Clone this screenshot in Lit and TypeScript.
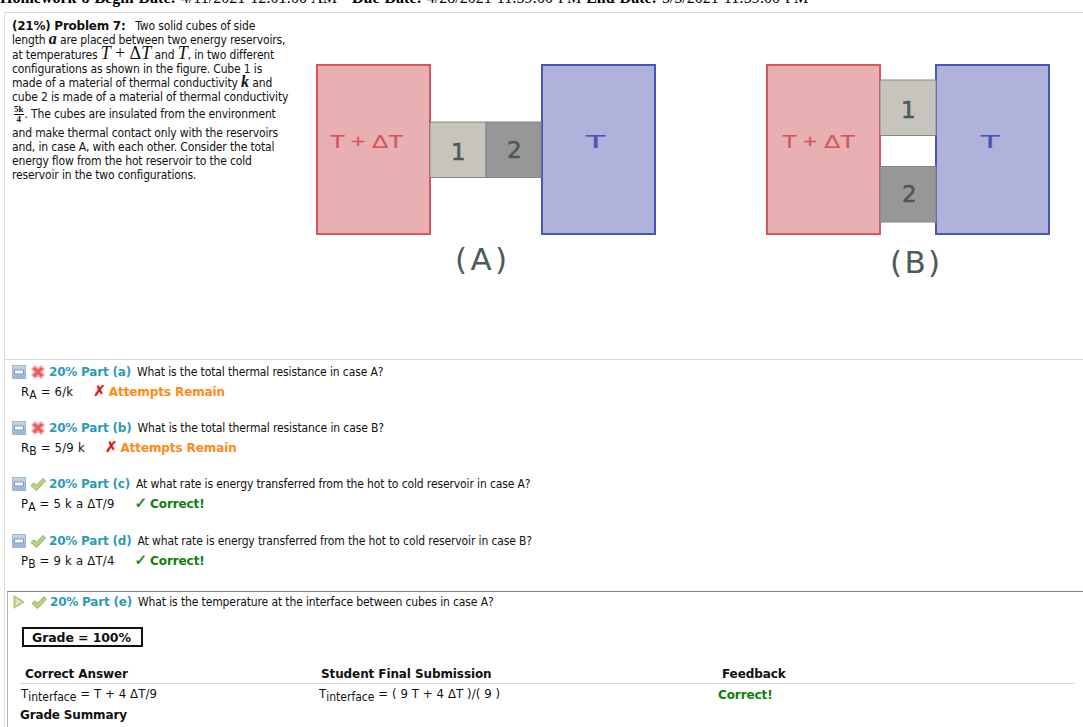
import {LitElement, css, html, svg} from 'lit';
import {customElement} from 'lit/decorators.js';

const minusIcon = html`<svg class="toggle" width="14" height="14" viewBox="0 0 14 14">
  <defs><linearGradient id="tg" x1="0" y1="0" x2="0" y2="1">
    <stop offset="0" stop-color="#c9d9ea"/><stop offset="1" stop-color="#94b3d2"/>
  </linearGradient></defs>
  <rect x="0.500" y="0.500" width="13" height="13" fill="url(#tg)" stroke="#9db8d4"/>
  <rect x="2.500" y="5" width="9" height="4" fill="#f6f9fc" stroke="#7f9cc0"/>
</svg>`;

const playIcon = html`<svg class="toggle" width="14" height="14" viewBox="0 0 14 14">
  <path d="M1.500 1.500 L10.500 7 L1.500 12.500 Z" fill="#dbe8b4" stroke="#b4c97f" stroke-width="2" stroke-linejoin="round"/>
</svg>`;

const crossIcon = html`<svg class="mark" width="16" height="16" viewBox="0 0 16 16">
  <path d="M2 5 L5 2 L8 5 L11 2 L14 5 L11 8 L14 11 L11 14 L8 11 L5 14 L2 11 L5 8 Z"
    fill="#e85a5a" stroke="#f2a0a0" stroke-width="1.500" stroke-linejoin="round"/>
</svg>`;

const checkIcon = html`<svg class="mark" width="16" height="16" viewBox="0 0 16 16">
  <path d="M1 9.500 L4 6.800 L6.500 9.300 L13 2.500 L15.500 5 L6.500 14.500 Z"
    fill="#b9d37c" stroke="#93ad62" stroke-width="1" stroke-linejoin="round"/>
</svg>`;

const reservoirs = (red: number, blue: number) => svg`
  <rect x="${red}" y="65" width="113" height="169" fill="#e8b0b3" stroke="#d4575d" stroke-width="2"/>
  <rect x="${blue}" y="65" width="113" height="169" fill="#b1b2dc" stroke="#4a56b5" stroke-width="2"/>`;

const cube = (x: number, y: number, w: number, h: number, fill: string) => svg`
  <rect x="${x}" y="${y}" width="${w}" height="${h}" fill="${fill}" stroke="#7f8a88" stroke-width="1"/>`;

function figA() {
  return svg`
    ${reservoirs(317, 542)}
    ${cube(430, 122, 56, 55.5, '#c6c4bd')}
    ${cube(486, 122, 55, 55.5, '#979797')}
    <text class="hand red" x="330" y="148" textLength="73" lengthAdjust="spacingAndGlyphs">T + ΔT</text>
    <text class="hand blue" x="585" y="148" textLength="21" lengthAdjust="spacingAndGlyphs">T</text>
    <text class="num dark" x="451" y="160">1</text>
    <text class="num dark" x="507" y="158">2</text>
    <text class="label dark" x="455" y="270" textLength="52">(A)</text>
  `;
}

function figB() {
  return svg`
    ${reservoirs(767, 936)}
    ${cube(880, 80, 56, 55.5, '#c6c4bd')}
    ${cube(880, 166.5, 56, 55.5, '#979797')}
    <text class="hand red" x="782" y="148" textLength="73" lengthAdjust="spacingAndGlyphs">T + ΔT</text>
    <text class="hand blue" x="980" y="148" textLength="20" lengthAdjust="spacingAndGlyphs">T</text>
    <text class="num dark" x="901" y="118">1</text>
    <text class="num dark" x="902" y="202">2</text>
    <text class="label dark" x="890" y="273" textLength="50">(B)</text>
  `;
}

@customElement('app-root')
export class AppRoot extends LitElement {
  static styles = css`
    :host {
      display: block;
      width: 1083px;
      height: 727px;
      overflow: hidden;
      background: white;
      color: #111;
      font: 12px/14px "DejaVu Sans Condensed", "DejaVu Sans", sans-serif;
      letter-spacing: -0.15px;
    }
    b, .bold {
      font-family: "DejaVu Sans", sans-serif;
      font-weight: bold;
      letter-spacing: -0.25px;
    }
    .header {
      height: 12px;
      overflow: hidden;
      white-space: nowrap;
      font: 16px/18px "Liberation Serif", serif;
      letter-spacing: 0;
      word-spacing: 1px;
      color: #000;
    }
    /* the page is scrolled: only the feet of this line are still in view */
    .header span { position: relative; top: -11px; }
    .header b { font-family: inherit; letter-spacing: 0; }
    .content {
      margin-left: 4px;
      border-left: 1px solid #dcdcdc;
      height: 715px;
    }
    .problem {
      display: flex;
      height: 348px;
      box-sizing: border-box;
      border-top: 1px solid #d8d8d8;
      border-bottom: 1px solid #d8d8d8;
    }
    .statement {
      flex: none;
      width: 298px;
      padding: 6px 0 0 7px;
      white-space: nowrap;
    }
    .math {
      font-family: "Liberation Serif", serif;
      font-style: italic;
      font-size: 18px;
      line-height: 12px;
      letter-spacing: 0;
    }
    .math.heavy { font-weight: bold; font-size: 16px; }
    .math .up { font-style: normal; }
    .fraction {
      display: inline-flex;
      flex-direction: column;
      align-items: center;
      vertical-align: middle;
      margin: 1px 1px 1.500px 2px;
      font: bold 9px/9px "Liberation Serif", serif;
      letter-spacing: 0;
    }
    .fraction span + span {
      border-top: 1px solid #111;
      padding: 0 1px;
      align-self: stretch;
      text-align: center;
    }
    .figure {
      flex: none;
      margin-top: 42px;
    }
    .hand {
      font-family: "Liberation Sans", sans-serif;
      font-size: 19px;
      stroke-width: 0.2px;
    }
    .num {
      font-family: "DejaVu Sans", sans-serif;
      font-size: 23px;
      stroke: #4d5a5a;
      stroke-width: 0.6px;
    }
    .label {
      font-family: "DejaVu Sans", sans-serif;
      font-size: 31px;
    }
    .red { fill: #d4575d; stroke: #d4575d; }
    .blue { fill: #4a56b5; stroke: #4a56b5; }
    .dark { fill: #4d5a5a; }
    .parts { padding-top: 3px; }
    .part {
      margin-left: 7px;
      height: 56.200px;
    }
    .part-head {
      display: flex;
      align-items: center;
      height: 18px;
      white-space: nowrap;
      letter-spacing: -0.12px;
    }
    .toggle { margin-right: 4px; flex: none; }
    .mark { margin-right: 3px; flex: none; }
    .pct {
      font: bold 12px/14px "DejaVu Sans", sans-serif;
      letter-spacing: -0.2px;
      color: #2b9ab8;
      margin-right: 6px;
    }
    .answer {
      display: flex;
      align-items: baseline;
      margin: 3px 0 0 9px;
      height: 16px;
      white-space: nowrap;
    }
    .expr {
      font-size: 13px;
      letter-spacing: 0.2px;
    }
    sub { font-size: 12px; line-height: 0; vertical-align: -3px; letter-spacing: 0; }
    .verdict {
      font: bold 12px/14px "DejaVu Sans", sans-serif;
      letter-spacing: -0.1px;
      margin-left: 20px;
    }
    .verdict i {
      font-style: normal;
      font-size: 15px;
      margin-right: -1px;
      -webkit-text-stroke: 0.4px currentColor;
    }
    .wrong { color: #ff8a14; }
    .wrong i { color: #e01010; }
    .right { color: #0b800b; }
    .open {
      margin: 3px 0 0 2px;
      border-top: 1px solid #808080;
      border-left: 1px solid #b0b0b0;
      padding: 1px 0 0 5px;
      height: 200px;
    }
    .grade {
      box-sizing: border-box;
      margin: 16px 0 0 9px;
      width: 121px;
      height: 20px;
      border: 2px solid #111;
      padding-left: 8px;
      white-space: nowrap;
      font: bold 12.500px/18px "DejaVu Sans", sans-serif;
      letter-spacing: -0.1px;
    }
    .table {
      margin: 19px 8px 0 7px;
      display: grid;
      grid-template-columns: 296px 401px 1fr;
    }
    .th {
      font: bold 12px/16px "DejaVu Sans", sans-serif;
      letter-spacing: -0.1px;
      border-bottom: 1px solid #d8d8d8;
      padding: 0 0 1px 5px;
    }
    .td {
      padding: 3px 0 0 1px;
      height: 17px;
      white-space: nowrap;
      font-size: 13px;
      letter-spacing: 0.1px;
    }
    .td.mid { padding-left: 3px; }
    .td.fb { padding-top: 4px; height: 16px; font-size: 12px; letter-spacing: -0.1px; color: #0b800b; }
    .summary {
      font: bold 12px/14px "DejaVu Sans", sans-serif;
      margin: 4px 0 0 7px;
    }
  `;

  renderHead(closed: boolean, ok: boolean, label: string, question: string) {
    return html`
      <div class="part-head">
        ${closed ? minusIcon : playIcon}
        ${ok ? checkIcon : crossIcon}
        <span class="pct">20% Part ${label}</span>
        <span>${question}</span>
      </div>`;
  }

  render() {
    return html`
      <div class="header"><span><b>Homework 8 Begin Date:</b> 4/11/2021 12:01:00 AM &nbsp;&nbsp;<b>Due Date:</b> 4/28/2021 11:59:00 PM <b>End Date:</b> 5/5/2021 11:59:00 PM</span></div>
      <div class="content">
        <div class="problem">
          <div class="statement">
            <b>(21%) Problem 7:</b>&nbsp;&nbsp; Two solid cubes of side<br>
            length <span class="math heavy">a</span> are placed between two energy reservoirs,<br>
            at temperatures <span class="math">T <span class="up">+ Δ</span>T</span> and <span class="math">T</span>, in two different<br>
            configurations as shown in the figure. Cube 1 is<br>
            made of a material of thermal conductivity <span class="math heavy">k</span> and<br>
            cube 2 is made of a material of thermal conductivity<br>
            <span class="fraction"><span>5k</span><span>4</span></span>. The cubes are insulated from the environment<br>
            and make thermal contact only with the reservoirs<br>
            and, in case A, with each other. Consider the total<br>
            energy flow from the hot reservoir to the cold<br>
            reservoir in the two configurations.
          </div>
          <svg class="figure" width="760" height="230" viewBox="310 55 760 230">${figA()}${figB()}</svg>
        </div>
        <div class="parts">
          <div class="part">
            ${this.renderHead(true, false, '(a)', 'What is the total thermal resistance in case A?')}
            <div class="answer"><span class="expr">R<sub>A</sub> = 6/k</span><span class="verdict wrong"><i>✗</i> Attempts Remain</span></div>
          </div>
          <div class="part">
            ${this.renderHead(true, false, '(b)', 'What is the total thermal resistance in case B?')}
            <div class="answer"><span class="expr">R<sub>B</sub> = 5/9 k</span><span class="verdict wrong"><i>✗</i> Attempts Remain</span></div>
          </div>
          <div class="part">
            ${this.renderHead(true, true, '(c)', 'At what rate is energy transferred from the hot to cold reservoir in case A?')}
            <div class="answer"><span class="expr">P<sub>A</sub> = 5 k a ΔT/9</span><span class="verdict right"><i>✓</i> Correct!</span></div>
          </div>
          <div class="part">
            ${this.renderHead(true, true, '(d)', 'At what rate is energy transferred from the hot to cold reservoir in case B?')}
            <div class="answer"><span class="expr">P<sub>B</sub> = 9 k a ΔT/4</span><span class="verdict right"><i>✓</i> Correct!</span></div>
          </div>
        </div>
        <div class="open">
          ${this.renderHead(false, true, '(e)', 'What is the temperature at the interface between cubes in case A?')}
          <div class="grade">Grade = 100%</div>
          <div class="table">
            <div class="th">Correct Answer</div>
            <div class="th">Student Final Submission</div>
            <div class="th">Feedback</div>
            <div class="td">T<sub>interface</sub> = T + 4 ΔT/9</div>
            <div class="td mid">T<sub>interface</sub> = ( 9 T + 4 ΔT )/( 9 )</div>
            <div class="td fb bold">Correct!</div>
          </div>
          <div class="summary">Grade Summary</div>
        </div>
      </div>
    `;
  }
}
